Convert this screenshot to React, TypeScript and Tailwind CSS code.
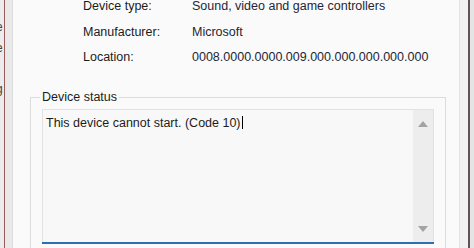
import React from 'react';

const rows = [
    { label: 'Device type:', value: 'Sound, video and game controllers' },
    { label: 'Manufacturer:', value: 'Microsoft' },
    { label: 'Location:', value: '0008.0000.0000.009.000.000.000.000.000' },
];

const UpArrow = () => (
    <svg width="10" height="6" viewBox="0 0 10 6"><polygon points="5,0 10,6 0,6" fill="#a3a3a3" /></svg>
);
const DownArrow = () => (
    <svg width="10" height="6" viewBox="0 0 10 6"><polygon points="0,0 10,0 5,6" fill="#a3a3a3" /></svg>
);

export default function App() {
    return (
        <div
            className="flex h-[248px] w-[474px] overflow-hidden bg-[#f0f0f0] text-[12.5px] text-[#1c1c1c]"
            style={{ fontFamily: '"Liberation Sans", Arial, sans-serif' }}
        >
            {/* left edge of the window behind */}
            <div className="flex w-[13px] shrink-0">
                <div className="relative w-[4px] overflow-hidden bg-[#ececec] text-[12px] leading-none text-[#444]">
                    <span className="absolute left-[-4px] top-[21px]">e</span>
                    <span className="absolute left-[-4px] top-[42px]">e</span>
                    <span className="absolute left-[-4px] top-[83px]">g</span>
                </div>
                <div className="w-px bg-[#9a5a5a]" />
                <div className="flex-1 bg-[#e9e9e9] border-r border-[#dcdcdc]" />
            </div>

            {/* dialog page */}
            <div className="flex w-[446px] shrink-0 flex-col bg-[#fafafa]">
                <div className="-mt-[6px] flex flex-col pl-[70px]">
                    {rows.map((r) => (
                        <div key={r.label} className="flex h-[25.5px] items-center">
                            <div className="w-[109px]">{r.label}</div>
                            <div className="text-[#1d2738]">{r.value}</div>
                        </div>
                    ))}
                </div>

                {/* group box */}
                <div className="relative ml-[17px] mt-[26px] w-[416px] flex-1 border border-b-0 border-[#dcdcdc] pt-[11px] pl-[11px]">
                    <span className="absolute left-[9px] top-[-8px] bg-[#fafafa] px-[2px] leading-[14px]">Device status</span>
                    <div className="flex h-[133px] w-[392px] border border-b-0 border-[#e2e2e2] bg-[#f8f8f8]">
                        <div className="flex flex-1 flex-col">
                            <div className="flex-1 pl-[3px] pt-[4px]">
                                <span>This device cannot start. (Code 10)</span>
                                <span className="ml-[1px] inline-block h-[13px] w-[1.5px] translate-y-[2px] bg-black" />
                            </div>
                        </div>
                        <div className="flex w-[20px] flex-col items-center justify-between bg-[#ededed] pb-[10px] pt-[11px]">
                            <UpArrow />
                            <DownArrow />
                        </div>
                    </div>
                    <div className="h-[2px] w-[392px] bg-[#2f6db5]" />
                </div>
            </div>

            {/* right edge */}
            <div className="w-[9px] shrink-0 border-l border-[#e3e3e3] bg-[#f1f1f1]" />
            <div className="w-[2px] shrink-0 bg-[#5e5252]" />
            <div className="flex-1 bg-[#e4e4e4]" />
        </div>
    );
}
